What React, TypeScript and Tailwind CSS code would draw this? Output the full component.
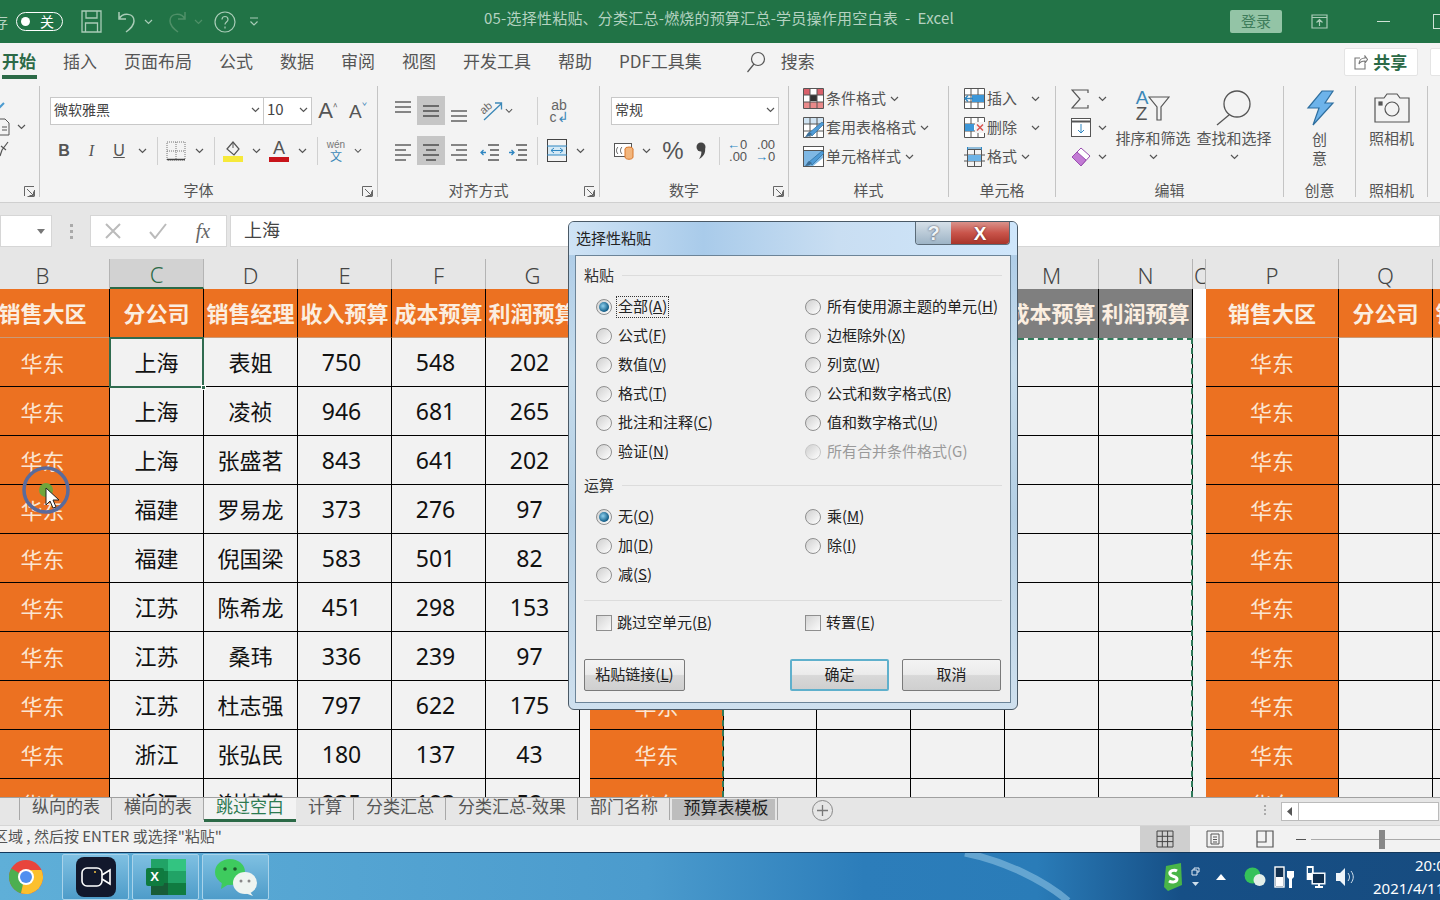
import React from "react";

const Chev = ({ c = "#555" }: { c?: string }) => (
  <svg width="9" height="6" viewBox="0 0 9 6"><path d="M1 1l3.5 3.5L8 1" stroke={c} fill="none" strokeWidth="1.2" /></svg>
);
const S = ({ className = "", children }: { className?: string; children?: React.ReactNode }) => (
  <div className={"flex shrink-0 items-center justify-center " + className}>{children}</div>
);
const VSep = () => <div className="h-[28px] w-px shrink-0 bg-[#d0d0d0]" />;
const Launcher = () => (
  <svg width="11" height="11" viewBox="0 0 11 11"><path d="M0.5 10V0.5H10M10 10.5H3.5M10.5 10.5V4M3 3l6.5 6.5M9.5 5.5v4h-4" stroke="#666" fill="none" strokeWidth="1" /></svg>
);
const Lines = ({ rows, c = "#555" }: { rows: number[][]; c?: string }) => (
  <svg width="22" height="22" viewBox="0 0 22 22">
    {rows.map((r, i) => <path key={i} d={`M${r[1]} ${r[0]}H${r[2]}`} stroke={c} strokeWidth="1.4" />)}
  </svg>
);
const Group = ({ className = "", labelCls = "", label, launcher, children }: { className?: string; labelCls?: string; label: string; launcher?: boolean; children: React.ReactNode }) => (
  <div className={"relative flex h-[111px] shrink-0 flex-col border-r border-[#c4c4c4] " + className}>
    <div className="flex-1">{children}</div>
    <div className={"h-[20px] text-center text-[15px] leading-[26px] text-[#555] " + labelCls}>{label}</div>
    {launcher && <div className="absolute bottom-[0px] right-[4px] h-[11px] w-[11px]"><Launcher /></div>}
  </div>
);

function TitleBar() {
  return (
    <div className="flex h-[43px] shrink-0 items-center bg-[#217346] text-[15px] text-[#b4d2c0]">
      <div className="w-[16px] shrink-0 overflow-hidden text-right text-[15px] leading-[38px]"><span className="relative -left-[8px]">存</span></div>
      <div className="flex h-[19px] w-[47px] shrink-0 items-center rounded-full border border-white pl-[4px] text-[14px] leading-none text-white">
        <div className="h-[9px] w-[9px] rounded-full bg-white" />
        <span className="mb-[2px] ml-[10px]">关</span>
      </div>
      <S className="ml-[17px] w-[22px]">
        <svg width="21" height="23" viewBox="0 0 21 23" fill="none" stroke="#a9ccb7" strokeWidth="1.3"><path d="M1 1h19v21H1zM5 1v7h11V1M4.500 22v-9h12v9" /></svg>
      </S>
      <S className="ml-[14px] w-[22px]">
        <svg width="20" height="24" viewBox="0 0 20 24" fill="none" stroke="#a9ccb7" strokeWidth="1.5"><path d="M2 2v7h7M2 9c4-7 15-6 15 2 0 5-4 8-8 11" /></svg>
      </S>
      <S className="ml-[5px] w-[10px]"><Chev c="#a9ccb7" /></S>
      <S className="ml-[13px] w-[22px]">
        <svg width="20" height="24" viewBox="0 0 20 24" fill="none" stroke="#4f9068" strokeWidth="1.5"><path d="M18 2v7h-7M18 9C14 2 3 3 3 11c0 5 4 8 8 11" /></svg>
      </S>
      <S className="ml-[5px] w-[10px]"><Chev c="#4f9068" /></S>
      <S className="ml-[11px] w-[22px]">
        <svg width="22" height="22" viewBox="0 0 22 22" fill="none" stroke="#a9ccb7" strokeWidth="1.2"><circle cx="11" cy="11" r="10" /><path d="M8 8.500c0-4 6-4 6 0 0 2.500-3 2.500-3 5M11 15.500v2" /></svg>
      </S>
      <S className="ml-[13px] w-[10px]">
        <svg width="10" height="10" viewBox="0 0 10 10" fill="none" stroke="#a9ccb7" strokeWidth="1.2"><path d="M1 1h8M1.500 4.500L5 8l3.500-3.500" /></svg>
      </S>
      <div className="ml-[225px] w-[470px] shrink-0 whitespace-nowrap pb-[8px] text-[15px] leading-[37px] tracking-[0.22px]">05-选择性粘贴、分类汇总-燃烧的预算汇总-学员操作用空白表&nbsp; -&nbsp; Excel</div>
      <div className="ml-[276px] flex h-[23px] w-[52px] shrink-0 items-center justify-center rounded-[2px] bg-[#93c4a6] pb-[1px] text-[15px] text-[#3e7d5b]">登录</div>
      <S className="ml-[27px] w-[20px]">
        <svg width="17" height="15" viewBox="0 0 17 15" fill="none" stroke="#a9ccb7" strokeWidth="1.2"><path d="M1 1h15v13H1zM1 3.500h15M8.500 12V6M5.500 8.500l3-3 3 3" /></svg>
      </S>
      <div className="ml-[48px] h-px w-[13px] shrink-0 bg-[#cfe2d6]" />
      <div className="ml-[43px] h-[15px] w-[12px] shrink-0 border border-[#cfe2d6]" />
    </div>
  );
}

function TabRow() {
  const tabs = ["插入", "页面布局", "公式", "数据", "审阅", "视图", "开发工具", "帮助", "PDF工具集"];
  return (
    <div className="flex h-[43px] shrink-0 items-start whitespace-nowrap bg-[#f3f3f3] pl-[2px] text-[17px] leading-[36px] text-[#555]">
      <div className="flex h-[36px] flex-col">
        <div className="h-[32px] font-bold leading-[36px] text-[#2c6a47]">开始</div>
        <div className="h-[4px] w-[35px] bg-[#2c6a47]" />
      </div>
      <div className="ml-[26px] flex gap-[27px]">
        {tabs.map((t) => <span key={t} className="whitespace-nowrap">{t}</span>)}
      </div>
      <S className="ml-[44px] h-[38px] w-[20px]">
        <svg width="20" height="22" viewBox="0 0 20 22" fill="none" stroke="#555" strokeWidth="1.2"><circle cx="12" cy="8" r="6.500" /><path d="M8 13L1.500 21" /></svg>
      </S>
      <span className="ml-[15px] shrink-0">搜索</span>
      <div className="ml-[529px] mt-[5px] flex h-[28px] w-[74px] shrink-0 items-center justify-center gap-[5px] rounded-[2px] border border-[#e4e4e4] bg-white font-bold leading-none text-[#2c6a47]">
        <svg width="14" height="15" viewBox="0 0 14 15" fill="none" stroke="#777" strokeWidth="1.1"><path d="M6 3H1v11h10V9M5 9c0-4 3-6 6-6V1l2.500 3.500L11 8V6C8 6 6 7 5 9z" /></svg>
        <span className="mb-[2px]">共享</span>
      </div>
      <div className="ml-[12px] mt-[5px] h-[28px] w-[30px] shrink-0 rounded-[2px] border border-[#e4e4e4] bg-white" />
    </div>
  );
}

const Item = ({ icon, text, w, chevMl }: { icon: React.ReactNode; text: string; w: string; chevMl?: string }) => (
  <div className={"flex h-[29px] items-center text-[15px] leading-none text-[#555] " + w}>
    <S className="w-[24px]">{icon}</S>
    <span className="ml-[1px] whitespace-nowrap pb-[2px]">{text}</span>
    <span className={"flex " + (chevMl || "ml-[4px]")}><Chev /></span>
  </div>
);

const Ic = ({ children }: { children: React.ReactNode }) => (
  <svg width="21" height="21" viewBox="0 0 21 21" fill="none">{children}</svg>
);
const Grid = () => <path d="M0.500 0.500h20v20h-20zM7 0v21M14 0v21M0 7h21M0 14h21" stroke="#555" strokeWidth="1" />;
const IconCond = () => (
  <Ic>
    <rect x="0.500" y="0.500" width="20" height="20" fill="#fff" />
    <rect x="1" y="1" width="6" height="6" fill="#d9606a" /><rect x="14" y="1" width="6" height="6" fill="#d9606a" />
    <rect x="7" y="7" width="7" height="6" fill="#333" /><rect x="1" y="14" width="6" height="6" fill="#e98a8a" /><rect x="7" y="14" width="13" height="6" fill="#e98a8a" />
    <Grid />
  </Ic>
);
const Brush = () => (
  <>
    <path d="M19 5l2 2L9 19l-3-3z" fill="#4f9bd6" stroke="#2c6f9e" strokeWidth="0.700" />
    <path d="M6 15c-2 1-2 3-4 5 3 0 6-1 7-3z" fill="#3b6e96" />
  </>
);
const IconTable = () => (
  <Ic><rect x="0.500" y="0.500" width="20" height="20" fill="#fff" /><rect x="1" y="1" width="19" height="6" fill="#cfe3f2" /><Grid /><Brush /></Ic>
);
const IconStyle = () => (
  <Ic><rect x="0.500" y="0.500" width="20" height="20" fill="#fff" stroke="#555" /><path d="M1 1h19v5H1z" fill="#fff" /><path d="M0 4.500h21" stroke="#555" /><path d="M1 5h19v7L10 20H1z" fill="#7fb8e4" /><Brush /></Ic>
);
const IconInsert = () => (
  <Ic><rect x="0.500" y="0.500" width="20" height="20" fill="#fff" /><Grid /><rect x="8" y="7" width="12" height="7" fill="#3d97d8" /><path d="M9 10.500H1M4 7.500l-3 3 3 3" stroke="#2f86c1" strokeWidth="1.400" /></Ic>
);
const IconDelete = () => (
  <Ic><rect x="0.500" y="0.500" width="20" height="20" fill="#fff" /><Grid /><rect x="1" y="7" width="9" height="7" fill="#3d97d8" /><rect x="11" y="5" width="10" height="11" fill="#f3f3f3" /><path d="M13 7.500l6 6M19 7.500l-6 6" stroke="#d9534f" strokeWidth="1.500" /></Ic>
);
const IconFormat = () => (
  <Ic><path d="M3.500 3.500h14v17h-14zM0 9h21M0 15h21M10.500 3v18" stroke="#555" /><rect x="4" y="9" width="13" height="6" fill="#6db3e6" /><path d="M3.500 1v3M17.500 1v3M3.500 2h14" stroke="#2f86c1" /></Ic>
);

function Ribbon() {
  return (
    <div className="flex h-[117px] shrink-0 border-b border-[#cfcfcf] bg-[#f3f3f3]">
      {/* clipboard */}
      <Group className="w-[40px]" label="" launcher>
        <div className="flex h-full flex-col pt-[14px]">
          <svg width="10" height="12" viewBox="0 0 10 12"><path d="M-2 9l6-6" stroke="#4b9bd0" strokeWidth="2" /></svg>
          <div className="mt-[6px] flex items-center gap-[7px]">
            <svg width="10" height="18" viewBox="0 0 10 18" fill="none" stroke="#555"><path d="M-3 1h8l4 4v12H-3zM2 9h5M2 12h5" /></svg>
            <Chev />
          </div>
          <svg className="mt-[5px]" width="9" height="16" viewBox="0 0 9 16" fill="none" stroke="#555" strokeWidth="1.2"><path d="M8 1L2 9l-2 6M6 9L1 5" /></svg>
        </div>
      </Group>
      {/* font */}
      <Group className="w-[338px]" labelCls="pr-[20px]" label="字体" launcher>
        <div className="pl-[10px] pt-[11px]">
          <div className="flex h-[28px] items-center">
            <div className="flex h-[28px] w-[214px] items-center justify-between border border-[#c8c8c8] bg-white pb-[3px] pl-[3px] pr-[3px] text-[14px] text-[#444]">微软雅黑<Chev /></div>
            <div className="-ml-px flex h-[28px] w-[49px] items-center justify-between border border-[#c8c8c8] bg-white pb-[3px] pl-[3px] pr-[3px] text-[15px] text-[#444]">10<Chev /></div>
            <S className="ml-[5px] h-[28px] w-[22px] items-center text-[22px] leading-none text-[#555]"><span className="font-['Liberation_Sans',sans-serif] font-normal">A</span><span className="-mt-[10px] text-[9px]">^</span></S>
            <S className="ml-[8px] h-[28px] w-[22px] text-[19px] leading-none text-[#555]"><span className="font-['Liberation_Sans',sans-serif]">A</span><span className="-mt-[10px] text-[9px] text-[#3c88b8]">ˇ</span></S>
          </div>
          <div className="mt-[11px] flex h-[29px] items-center text-[#555]">
            <S className="w-[28px] font-['Liberation_Sans',sans-serif] text-[16px] font-bold">B</S>
            <S className="w-[27px] font-['Liberation_Serif',serif] text-[16px] italic">I</S>
            <S className="w-[28px] font-['Liberation_Sans',sans-serif] text-[16px] underline">U</S>
            <S className="w-[18px]"><Chev /></S>
            <div className="ml-[6px]"><VSep /></div>
            <S className="w-[35px]">
              <svg width="20" height="20" viewBox="0 0 20 20" fill="none" stroke="#777"><path d="M1 1h18v18H1zM10 1v18M1 10h18" strokeDasharray="1 1" /><path d="M1 18.500h18" stroke="#444" strokeWidth="1.5" /></svg>
            </S>
            <S className="w-[12px]"><Chev /></S>
            <div className="ml-[9px]"><VSep /></div>
            <S className="w-[36px]">
              <svg width="22" height="24" viewBox="0 0 22 24"><path d="M5 10l6-7 6 7-5 6z" fill="none" stroke="#555" strokeWidth="1.2" /><path d="M11 3v6" stroke="#555" /><rect x="1" y="17" width="20" height="6" fill="#f6e93a" /></svg>
            </S>
            <S className="w-[10px]"><Chev /></S>
            <S className="w-[36px]">
              <div className="flex w-[20px] flex-col items-center font-['Liberation_Sans',sans-serif] text-[18px] leading-[18px] text-[#555]">A<div className="h-[5px] w-[20px] bg-[#c8141a]" /></div>
            </S>
            <S className="w-[10px]"><Chev /></S>
            <div className="ml-[10px]"><VSep /></div>
            <S className="w-[36px]">
              <div className="flex flex-col items-center leading-none"><span className="font-['Liberation_Sans',sans-serif] text-[10px] text-[#777]">wén</span><span className="text-[12px] text-[#3c88b8]">文</span></div>
            </S>
            <S className="w-[8px]"><Chev /></S>
          </div>
        </div>
      </Group>
      {/* alignment */}
      <Group className="w-[222px]" labelCls="pr-[20px]" label="对齐方式" launcher>
        <div className="pl-[11px] pt-[10px]">
          <div className="flex h-[29px] items-center">
            <S className="w-[28px]"><Lines rows={[[2, 3, 19], [7, 3, 19], [12, 3, 19]]} /></S>
            <S className="h-[29px] w-[28px] bg-[#c6c6c6]"><Lines rows={[[6, 3, 19], [11, 3, 19], [16, 3, 19]]} c="#444" /></S>
            <S className="w-[28px]"><Lines rows={[[11, 3, 19], [16, 3, 19], [21, 3, 19]]} /></S>
            <S className="ml-[4px] w-[28px]">
              <svg width="24" height="24" viewBox="0 0 24 24" fill="none"><path d="M5 21L22 5M16 4h6.500v6.500" stroke="#3c88b8" strokeWidth="1.3" /><text x="2" y="13" fontSize="11" fill="#666" fontFamily="Liberation Sans" transform="rotate(-40 7 11)">ab</text></svg>
            </S>
            <S className="w-[8px]"><Chev /></S>
            <div className="ml-[24px]"><VSep /></div>
            <S className="ml-[6px] w-[30px]">
              <div className="flex flex-col items-center font-['Liberation_Sans',sans-serif] text-[14px] leading-[12px] text-[#666]">ab<span>c<span className="text-[#3c88b8]">↲</span></span></div>
            </S>
          </div>
          <div className="mt-[11px] flex h-[29px] items-center">
            <S className="w-[28px]"><Lines rows={[[5, 3, 19], [10, 3, 14], [15, 3, 19], [20, 3, 14]]} /></S>
            <S className="h-[29px] w-[28px] bg-[#c6c6c6]"><Lines rows={[[5, 3, 19], [10, 6, 16], [15, 3, 19], [20, 6, 16]]} c="#444" /></S>
            <S className="w-[28px]"><Lines rows={[[5, 3, 19], [10, 8, 19], [15, 3, 19], [20, 8, 19]]} /></S>
            <S className="ml-[3px] w-[28px]">
              <svg width="22" height="22" viewBox="0 0 22 22" fill="none"><path d="M9 5h11M11 10h9M11 15h9M9 20h11" stroke="#555" strokeWidth="1.3" /><path d="M7 12.500H2M4.500 10L2 12.500 4.500 15" stroke="#2f86c1" strokeWidth="1.3" /></svg>
            </S>
            <S className="w-[28px]">
              <svg width="22" height="22" viewBox="0 0 22 22" fill="none"><path d="M9 5h11M11 10h9M11 15h9M9 20h11" stroke="#555" strokeWidth="1.3" /><path d="M2 12.500h5M4.500 10L7 12.500 4.500 15" stroke="#2f86c1" strokeWidth="1.3" /></svg>
            </S>
            <div className="ml-[5px]"><VSep /></div>
            <S className="ml-[8px] w-[22px]">
              <svg width="20" height="24" viewBox="0 0 20 24" fill="none" stroke="#444"><rect x="0.500" y="0.500" width="19" height="22" /><rect x="1" y="7" width="18" height="9" fill="#d5e9f5" stroke="none" /><path d="M0 7h20M0 16h20M4 11.500h12M7 9l-3 2.500L7 14M13 9l3 2.500L13 14" stroke="#2f86c1" /></svg>
            </S>
            <S className="ml-[6px] w-[12px]"><Chev /></S>
          </div>
        </div>
      </Group>
      {/* number */}
      <Group className="w-[189px]" labelCls="pr-[20px]" label="数字" launcher>
        <div className="pl-[11px] pt-[11px]">
          <div className="flex h-[28px] w-[168px] items-center justify-between border border-[#c8c8c8] bg-white pb-[3px] pl-[3px] pr-[3px] text-[14px] text-[#444]">常规<Chev /></div>
          <div className="mt-[11px] flex h-[29px] items-center text-[#555]">
            <S className="w-[26px]">
              <svg width="21" height="20" viewBox="0 0 21 20" fill="none"><rect x="0.500" y="2.500" width="17" height="13" stroke="#555" fill="#fff" /><path d="M4 6c-2 2-2 5 0 7M8 6c-2 2-2 5 0 7" stroke="#555" /><ellipse cx="15" cy="8" rx="4" ry="2" fill="#f2b57c" stroke="#d8762a" /><path d="M11 8v8c0 3 8 3 8 0V8" fill="#f2b57c" stroke="#d8762a" /></svg>
            </S>
            <S className="ml-[1px] w-[16px]"><Chev /></S>
            <S className="ml-[3px] w-[32px] font-['Liberation_Sans',sans-serif] text-[24px] leading-none">%</S>
            <S className="w-[24px]">
              <svg width="10" height="17" viewBox="0 0 10 17"><circle cx="5" cy="5" r="4.500" fill="#444" /><path d="M9 6c1 5-2 9-6 11 2-3 3-6 2-9z" fill="#444" /></svg>
            </S>
            <div className="ml-[6px]"><VSep /></div>
            <S className="ml-[3px] w-[28px]">
              <div className="flex flex-col items-end font-['Liberation_Sans',sans-serif] text-[13px] leading-[12px] text-[#555]"><span><span className="text-[#2f86c1]">←</span>0</span><span>.00</span></div>
            </S>
            <S className="w-[28px]">
              <div className="flex flex-col items-end font-['Liberation_Sans',sans-serif] text-[13px] leading-[12px] text-[#555]"><span>.00</span><span><span className="text-[#2f86c1]">→</span>0</span></div>
            </S>
          </div>
        </div>
      </Group>
      {/* styles */}
      <Group className="w-[160px]" label="样式">
        <div className="-mt-[2px] pl-[12px]">
          <Item w="w-[140px]" text="条件格式" icon={<IconCond />} />
          <Item w="w-[140px]" text="套用表格格式" icon={<IconTable />} />
          <Item w="w-[140px]" text="单元格样式" icon={<IconStyle />} />
        </div>
      </Group>
      {/* cells */}
      <Group className="w-[107px]" label="单元格">
        <div className="-mt-[2px] pl-[13px]">
          <Item w="w-[90px]" text="插入" chevMl="ml-[14px]" icon={<IconInsert />} />
          <Item w="w-[90px]" text="删除" chevMl="ml-[14px]" icon={<IconDelete />} />
          <Item w="w-[90px]" text="格式" icon={<IconFormat />} />
        </div>
      </Group>
      {/* edit */}
      <Group className="w-[228px]" label="编辑">
        <div className="-mt-[2px] flex">
          <div className="ml-[15px] flex w-[41px] flex-col">
            <div className="flex h-[29px] items-center gap-[9px]">
              <svg width="18" height="20" viewBox="0 0 18 20" fill="none" stroke="#555" strokeWidth="1.2"><path d="M17 4V1H1l8 9-8 9h16v-3" /></svg><Chev />
            </div>
            <div className="flex h-[29px] items-center gap-[7px]">
              <svg width="20" height="20" viewBox="0 0 20 20" fill="none"><rect x="0.500" y="0.500" width="19" height="18" fill="#fff" stroke="#555" /><path d="M0 3.500h20" stroke="#555" strokeWidth="2" /><path d="M10 6v9M7 12l3 3 3-3" stroke="#2f86c1" /></svg><Chev />
            </div>
            <div className="flex h-[29px] items-center gap-[7px]">
              <svg width="20" height="20" viewBox="0 0 20 20"><path d="M10 1l9 8-9 10-9-9z" fill="#fff" stroke="#9a4fb0" /><path d="M1 10l5-5 9 8-5 6z" fill="#c27ad4" stroke="#9a4fb0" /></svg><Chev />
            </div>
          </div>
          <div className="ml-[1px] flex w-[80px] flex-col items-center">
            <div className="mt-[6px] flex h-[34px] items-start">
              <div className="flex flex-col font-['Liberation_Sans',sans-serif] text-[19px] leading-[16px]"><span className="text-[#3c88b8]">A</span><span className="text-[#555]">Z</span></div>
              <svg width="22" height="28" className="mt-[5px]" viewBox="0 0 22 28" fill="none" stroke="#555" strokeWidth="1.2"><path d="M1 2h20l-8 10v13h-4V12z" /></svg>
            </div>
            <div className="mt-[3px] whitespace-nowrap text-[15px] leading-[22px] text-[#555]">排序和筛选</div>
            <div className="mt-[3px] flex h-[10px] items-center"><Chev /></div>
          </div>
          <div className="flex w-[82px] flex-col items-center">
            <div className="flex h-[43px] items-start pt-[5px]">
              <svg width="38" height="38" viewBox="0 0 38 38" fill="none" stroke="#555" strokeWidth="1.3"><circle cx="22" cy="15" r="13" /><path d="M14 26L2 36" /></svg>
            </div>
            <div className="whitespace-nowrap text-[15px] leading-[22px] text-[#555]">查找和选择</div>
            <div className="mt-[3px] flex h-[10px] items-center"><Chev /></div>
          </div>
        </div>
      </Group>
      <Group className="w-[72px]" label="创意">
        <div className="flex flex-col items-center pt-[4px]">
          <svg width="30" height="36" viewBox="0 0 30 36"><path d="M17 1h11l-8 12h8L8 35l6-17H3z" fill="#6db3ea" stroke="#2f6f9f" strokeWidth="1.2" /></svg>
          <div className="mt-[3px] text-center text-[15px] leading-[19px] text-[#555]">创<br />意</div>
        </div>
      </Group>
      <Group className="w-[72px]" label="照相机">
        <div className="flex flex-col items-center pt-[7px]">
          <svg width="36" height="30" viewBox="0 0 36 30" fill="none" stroke="#555" strokeWidth="1.2"><path d="M1 5h9l3-4h10l3 4h9v24H1z" /><circle cx="18" cy="16" r="7" /><rect x="5" y="9" width="3" height="3" fill="#555" /></svg>
          <div className="mt-[5px] whitespace-nowrap text-center text-[15px] leading-[19px] text-[#555]">照相机</div>
        </div>
      </Group>
    </div>
  );
}

function FormulaBar() {
  return (
    <div className="flex h-[56px] shrink-0 bg-[#e6e6e6] pt-[12px]">
      <div className="flex h-[32px] w-[52px] items-center justify-end border border-[#d6d6d6] bg-white pr-[6px]">
        <svg width="8" height="5" viewBox="0 0 8 5"><path d="M0 0h8L4 5z" fill="#777" /></svg>
      </div>
      <S className="h-[32px] w-[38px] text-[#999]">
        <div className="flex flex-col gap-[3px]"><div className="h-[3px] w-[3px] bg-[#aaa]" /><div className="h-[3px] w-[3px] bg-[#aaa]" /><div className="h-[3px] w-[3px] bg-[#aaa]" /></div>
      </S>
      <div className="flex h-[32px] w-[137px] items-center border border-[#d6d6d6] bg-white">
        <S className="w-[44px]"><svg width="16" height="16" viewBox="0 0 16 16"><path d="M1 1l14 14M15 1L1 15" stroke="#bbb" strokeWidth="2" /></svg></S>
        <S className="w-[46px]"><svg width="18" height="16" viewBox="0 0 18 16" fill="none"><path d="M1 9l5 6L17 1" stroke="#bbb" strokeWidth="2" /></svg></S>
        <S className="w-[44px] font-['Liberation_Serif',serif] text-[20px] italic text-[#666]">fx</S>
      </div>
      <div className="ml-[3px] flex h-[32px] flex-1 items-center border border-[#d6d6d6] bg-white pb-[3px] pl-[13px] text-[18px] text-[#444]">上海</div>
    </div>
  );
}

const widths = ["w-[134px]", "w-[94px]", "w-[94px]", "w-[94px]", "w-[94px]", "w-[94px]", "w-[10px]", "w-[134px]", "w-[93px]", "w-[94px]", "w-[94px]", "w-[94px]", "w-[94px]", "w-[13px]", "w-[133px]", "w-[94px]", "w-[94px]"];
const letters = ["B", "C", "D", "E", "F", "G", "H", "I", "J", "K", "L", "M", "N", "O", "P", "Q", "R"];
const heads = ["销售大区", "分公司", "销售经理", "收入预算", "成本预算", "利润预算", "", "", "", "", "", "成本预算", "利润预算", "", "销售大区", "分公司", "销售经理"];
const rows: string[][] = [
  ["上海", "表姐", "750", "548", "202"],
  ["上海", "凌祯", "946", "681", "265"],
  ["上海", "张盛茗", "843", "641", "202"],
  ["福建", "罗易龙", "373", "276", "97"],
  ["福建", "倪国梁", "583", "501", "82"],
  ["江苏", "陈希龙", "451", "298", "153"],
  ["江苏", "桑玮", "336", "239", "97"],
  ["江苏", "杜志强", "797", "622", "175"],
  ["浙江", "张弘民", "180", "137", "43"],
  ["浙江", "谢桂芳", "235", "183", "52"],
];

function Sheet() {
  return (
    <div className="h-[538px] shrink-0 overflow-hidden bg-[#f2f2f2]">
      <div className="-ml-[24px] flex h-[30px] w-[1560px]">
        {letters.map((l, i) => (
          <div key={l} className={"flex shrink-0 items-center overflow-hidden border-r border-[#b4b4b4] pt-[2px] font-['Noto_Sans',sans-serif] text-[22px] font-light leading-none " + widths[i] + " " + (l === "C" ? "justify-center border-b-2 border-b-[#2c6a47] bg-[#d2d2d2] text-[#2c6a47]" : l === "O" ? "bg-[#e6e6e6] pl-px text-[#444]" : "justify-center bg-[#e6e6e6] text-[#444]")}>{l === "H" || l === "I" || l === "J" || l === "K" || l === "L" ? "" : l}</div>
        ))}
      </div>
      <div className="-ml-[24px] flex h-[49px] w-[1560px]">
        {heads.map((h, i) => {
          const gray = i === 8 || i === 9 || i === 10 || i === 11 || i === 12;
          const blank = i === 6 || i === 13;
          return (
            <div key={i} className={"flex shrink-0 items-center justify-center overflow-hidden whitespace-nowrap pb-[3px] text-[22px] font-bold leading-none text-[#fbeee0] " + widths[i] + " " + (blank ? "bg-white" : gray ? "border-r border-black bg-[#7f7f7f] text-[#f4f4f4]" : "border-b border-r border-b-[#c99a78] border-r-black bg-[#ec7121]")}>{h}</div>
          );
        })}
      </div>
      {rows.map((r, ri) => (
        <div key={ri} className="-ml-[24px] flex h-[49px] w-[1560px]">
          {letters.map((l, i) => {
            const orange = i === 0 || i === 7 || i === 14;
            const blank = i === 6 || i === 13;
            let text = "";
            if (orange && (i !== 7 || ri >= 7)) text = "华东";
            else if (i >= 1 && i <= 5) text = r[i - 1];
            const num = i >= 3 && i <= 5;
            return (
              <div key={l} className={"flex shrink-0 items-center justify-center overflow-hidden whitespace-nowrap leading-none " + widths[i] + " " + (blank ? "bg-[#f4f4f4]" : orange ? "border-b border-r border-black bg-[#ec7121] text-[22px] text-[#fbe6d2]" : num ? "border-b border-r border-black pr-[6px] font-['Noto_Sans',sans-serif] text-[23px] text-[#111]" : "border-b border-r border-black pb-[2px] text-[22px] text-[#111]")}>{text}</div>
            );
          })}
        </div>
      ))}
    </div>
  );
}

function SheetTabs() {
  const Tab = ({ t }: { t: string }) => (
    <div className="flex h-[22px] items-center whitespace-nowrap border-r border-[#a8a8a8] pb-[8px] pl-[12px] pr-[11px]">{t}</div>
  );
  return (
    <div className="flex h-[28px] shrink-0 items-start whitespace-nowrap border-t border-[#a0a0a0] bg-[#e6e6e6] pl-[19px] text-[17px] leading-none text-[#555]">
      <div className="h-[22px] w-px bg-[#a8a8a8]" />
      <Tab t="纵向的表" />
      <Tab t="横向的表" />
      <div className="flex h-[24px] w-[92px] items-center justify-center border-b-[3px] border-[#2c6a47] bg-[#f3f3f3] pb-[6px] text-[#2c7a50]">跳过空白</div>
      <Tab t="计算" />
      <Tab t="分类汇总" />
      <Tab t="分类汇总-效果" />
      <Tab t="部门名称" />
      <div className="ml-[2px] mt-[1px] flex h-[21px] w-[103px] items-center justify-center bg-[#bdbdbd] pb-[6px] pl-[5px] text-[#222]">预算表模板</div>
      <div className="ml-[2px] h-[22px] w-px bg-[#a8a8a8]" />
      <S className="ml-[34px] mt-[2px] h-[21px] w-[21px] rounded-full border border-[#888]">
        <svg width="11" height="11" viewBox="0 0 11 11"><path d="M5.500 0v11M0 5.500h11" stroke="#777" strokeWidth="1.300" /></svg>
      </S>
      <div className="ml-[431px] mt-[7px] flex flex-col gap-[2px]"><div className="h-[2px] w-[2px] bg-[#aaa]" /><div className="h-[2px] w-[2px] bg-[#aaa]" /><div className="h-[2px] w-[2px] bg-[#aaa]" /></div>
      <div className="ml-[15px] mt-[4px] flex h-[19px] w-[158px] shrink-0 border border-[#bbb] bg-white">
        <S className="h-full w-[17px] border-r border-[#bbb]"><svg width="5" height="9" viewBox="0 0 5 9"><path d="M5 0v9L0 4.500z" fill="#555" /></svg></S>
      </div>
    </div>
  );
}

function StatusBar() {
  return (
    <div className="flex h-[27px] shrink-0 items-center border-t border-[#d6d6d6] bg-[#f2f2f2] text-[15px] leading-none text-[#555]">
      <div className="w-[1140px] overflow-hidden whitespace-nowrap pb-[7px]"><span className="relative -left-[7px]">区域 , 然后按 ENTER 或选择"粘贴"</span></div>
      <S className="h-[27px] w-[50px] bg-[#cfcfcf]">
        <svg width="18" height="18" viewBox="0 0 18 18" fill="none" stroke="#444"><path d="M1 1h16v16H1zM6.300 1v16M11.600 1v16M1 6.300h16M1 11.600h16" /></svg>
      </S>
      <S className="w-[50px]">
        <svg width="18" height="18" viewBox="0 0 18 18" fill="none" stroke="#555"><path d="M1 1h16v16H1zM5 4h8v10H5zM7 7h4M7 9.500h4M7 12h4" /></svg>
      </S>
      <S className="w-[50px]">
        <svg width="18" height="18" viewBox="0 0 18 18" fill="none" stroke="#555"><path d="M1 1h16v16H1zM1 12h9V1" strokeWidth="1.200" /></svg>
      </S>
      <div className="ml-[6px] h-px w-[10px] bg-[#555]" />
      <div className="relative ml-[5px] h-px flex-1 bg-[#aaa]">
        <div className="absolute -top-[9px] left-[68px] h-[19px] w-[6px] bg-[#888]" />
      </div>
    </div>
  );
}

const Chrome = () => (
  <svg width="36" height="36" viewBox="0 0 36 36">
    <circle cx="18" cy="18" r="17" fill="#e8453c" />
    <path d="M18 18L3.300 9.500A17 17 0 0 0 13 34.300z" fill="#4caf50" />
    <path d="M18 11h15.500A17 17 0 0 1 13 34.300z" fill="#fbc02d" />
    <circle cx="18" cy="18" r="8" fill="#fff" />
    <circle cx="18" cy="18" r="6" fill="#4f8ff0" />
  </svg>
);

function Taskbar() {
  return (
    <div className="relative flex h-[48px] shrink-0 items-center overflow-hidden border-t border-[#12385c] bg-[linear-gradient(90deg,#5fafd8_0%,#4b9bcd_45%,#2c7dba_60%,#2a7cb8_72%,#164f86_82%,#174c80_100%)]">
      <svg className="absolute left-[940px] top-0" width="150" height="48" viewBox="0 0 150 48" fill="none"><path d="M25 0C65 8 105 28 128 48" stroke="#7db7dc" strokeWidth="7" opacity="0.7" /></svg>
      <S className="relative h-[46px] w-[52px]"><Chrome /></S>
      <S className="relative ml-[10px] h-[46px] w-[67px] rounded-[2px] border border-[#a9d3ea] bg-[linear-gradient(180deg,#7fc0e2,#4e9cc9)]">
        <div className="flex h-[40px] w-[40px] items-center justify-center rounded-[8px] bg-[#12182c]">
          <svg width="30" height="22" viewBox="0 0 30 22" fill="none" stroke="#fff" strokeWidth="1.600"><rect x="1" y="2" width="20" height="18" rx="5" /><path d="M21 9l8-5v14l-8-5" /><circle cx="14" cy="6" r="1" fill="#f6c445" stroke="none" /></svg>
        </div>
      </S>
      <S className="relative ml-[3px] h-[46px] w-[67px] rounded-[2px] border border-[#a9d3ea] bg-[linear-gradient(180deg,#7fc0e2,#4e9cc9)]">
        <div className="relative h-[36px] w-[40px]">
          <div className="absolute left-[5px] top-0 grid h-[36px] w-[35px] grid-cols-2 grid-rows-3">
            <div className="bg-[#21a366]" /><div className="bg-[#33c481]" /><div className="bg-[#107c41]" /><div className="bg-[#21a366]" /><div className="bg-[#185c37]" /><div className="bg-[#107c41]" />
          </div>
          <div className="absolute left-0 top-[9px] flex h-[18px] w-[18px] items-center justify-center rounded-[2px] bg-[#0f7b3f] font-['Liberation_Sans',sans-serif] text-[13px] font-bold leading-none text-white">X</div>
        </div>
      </S>
      <S className="relative ml-[3px] h-[46px] w-[67px] rounded-[2px] border border-[#a9d3ea] bg-[linear-gradient(180deg,#7fc0e2,#4e9cc9)]">
        <svg width="44" height="40" viewBox="0 0 44 40">
          <ellipse cx="16" cy="15" rx="15" ry="13" fill="#3ecb5e" /><path d="M8 25l-1 7 8-5z" fill="#3ecb5e" />
          <circle cx="11" cy="12" r="1.800" fill="#1d5a2c" /><circle cx="21" cy="12" r="1.800" fill="#1d5a2c" />
          <ellipse cx="31" cy="26" rx="12" ry="11" fill="#eef4f0" /><path d="M36 35l3 4-8-3z" fill="#eef4f0" />
          <circle cx="27" cy="24" r="1.500" fill="#888" /><circle cx="35" cy="24" r="1.500" fill="#888" />
        </svg>
      </S>
      <S className="relative ml-[893px] w-[22px]">
        <svg width="20" height="30" viewBox="0 0 20 30"><path d="M3 4l15-3 1 22-14 6-4-4z" fill="#49b548" /><path d="M14 9c-3-2-8 0-7 3s7 2 7 5-5 4-8 2" fill="none" stroke="#fff" strokeWidth="3" /></svg>
      </S>
      <div className="relative ml-[7px] flex w-[14px] flex-col items-center gap-[6px]">
        <svg width="9" height="9" viewBox="0 0 9 9" fill="none" stroke="#dfeaf4"><path d="M3 3V1h5v4H6M1 3h5v5H1z" /></svg>
        <svg width="7" height="4" viewBox="0 0 7 4"><path d="M0 0h7L3.500 4z" fill="#cfdfec" /></svg>
      </div>
      <S className="relative ml-[13px] w-[16px]"><svg width="10" height="6" viewBox="0 0 10 6"><path d="M0 6h10L5 0z" fill="#fff" /></svg></S>
      <S className="relative ml-[14px] w-[24px]">
        <svg width="22" height="20" viewBox="0 0 22 20"><circle cx="8.500" cy="8.500" r="8" fill="#35c25a" /><circle cx="15.500" cy="13" r="6" fill="#e3eee8" /></svg>
      </S>
      <S className="relative ml-[6px] w-[22px]">
        <svg width="20" height="26" viewBox="0 0 20 26" fill="none" stroke="#fff" strokeWidth="1.400"><rect x="1" y="3" width="9" height="20" fill="#12304f" /><rect x="2" y="13" width="7" height="9" fill="#fff" stroke="none" /><path d="M15 2v5M18 2v5M13 7h7v6l-2 2v9h-3v-9l-2-2z" fill="#fff" stroke="none" /></svg>
      </S>
      <S className="relative ml-[10px] w-[22px]">
        <svg width="20" height="24" viewBox="0 0 20 24"><rect x="0.700" y="1" width="7" height="14" fill="#fff" /><rect x="2" y="3" width="4" height="5" fill="#1c4f7c" /><rect x="6" y="8" width="13" height="11" fill="#dfeaf4" stroke="#fff" /><rect x="7" y="9" width="11" height="9" fill="#0f2f4f" /><path d="M9 22h8M13 19v3" stroke="#fff" strokeWidth="2" /></svg>
      </S>
      <S className="relative ml-[7px] w-[22px]">
        <svg width="20" height="22" viewBox="0 0 20 22" fill="none"><path d="M1 7h4l5-5v18l-5-5H1z" fill="#eef4f9" /><path d="M13 7c2 3 2 5 0 8M16 5c3 4 3 8 0 12" stroke="#cfdfec" /></svg>
      </S>
      <div className="relative ml-[17px] flex w-[90px] shrink-0 flex-col whitespace-nowrap font-['Noto_Sans',sans-serif] text-[15px] leading-[23px] text-white">
        <span className="pl-[42px]">20:05</span>
        <span>2021/4/11</span>
      </div>
    </div>
  );
}

const Radio = ({ on, dim }: { on?: boolean; dim?: boolean }) => (
  <div className={"flex h-[16px] w-[16px] shrink-0 items-center justify-center rounded-full border bg-[linear-gradient(135deg,#cfcfcf,#ffffff)] " + (dim ? "border-[#c8c8c8]" : "border-[#8f8f8f]")}>
    {on && <div className="h-[10px] w-[10px] rounded-full bg-[radial-gradient(circle_at_40%_40%,#8fd0ee,#0e5a85_70%)]" />}
  </div>
);
const Opt = ({ label, k, on, dim, focus }: { label: string; k: string; on?: boolean; dim?: boolean; focus?: boolean }) => (
  <div className={"flex h-[29px] items-center " + (dim ? "text-[#9a9a9a]" : "text-[#222]")}>
    <Radio on={on} dim={dim} />
    <span className={"ml-[4px] whitespace-nowrap border px-px pb-[2px] leading-[18px] " + (focus ? "border-dotted border-[#333]" : "border-transparent")}>
      {label}(<span className={dim ? "" : "underline"}>{k}</span>)
    </span>
  </div>
);
const Check = ({ label, k }: { label: string; k: string }) => (
  <div className="flex h-[29px] items-center text-[#222]">
    <div className="h-[16px] w-[16px] shrink-0 border border-[#8f8f8f] bg-[linear-gradient(135deg,#d4d4d4,#fafafa)]" />
    <span className="ml-[5px] whitespace-nowrap pb-[2px] leading-[18px]">{label}(<span className="underline">{k}</span>)</span>
  </div>
);
const Legend = ({ t }: { t: string }) => (
  <div className="flex h-[20px] items-center gap-[8px] text-[#333]"><span className="pb-[2px]">{t}</span><div className="h-px flex-1 bg-[#dcdcdc]" /></div>
);
const Btn = ({ t, cls }: { t: React.ReactNode; cls: string }) => (
  <div className={"flex h-[32px] items-center justify-center rounded-[2px] bg-[linear-gradient(180deg,#f3f3f3_0%,#ebebeb_48%,#d8d8d8_52%,#cfcfcf_100%)] pb-[4px] text-[#222] " + cls}>{t}</div>
);

function Dialog() {
  return (
    <div className="absolute left-[568px] top-[221px] h-[489px] w-[450px] rounded-[6px] border border-[#4a5966] bg-[linear-gradient(180deg,#a9c9e6_0%,#c6dcec_30%,#b4cfe4_60%,#cfe0ee_100%)] font-['Noto_Sans_CJK_SC',sans-serif] text-[15px] leading-none">
      <div className="flex h-[33px] items-center rounded-t-[5px] bg-[linear-gradient(90deg,#cfe3f5_0%,#a9cbea_30%,#c9def2_60%,#cfe6fb_100%)] pl-[7px] text-[#222]"><span className="pb-[2px]">选择性粘贴</span></div>
      <div className="absolute right-[7px] top-0 flex h-[23px] overflow-hidden rounded-b-[4px] border border-t-0 border-[#5b6b78]">
        <S className="w-[35px] bg-[linear-gradient(180deg,#d5dfe8,#9eb4c6)]">
          <span className="font-['Liberation_Sans',sans-serif] text-[20px] font-bold leading-none text-[#eef3f7] [text-shadow:0_0_2px_#334]">?</span>
        </S>
        <S className="w-[58px] bg-[linear-gradient(180deg,#d9918a_0%,#c9544a_50%,#a8342a_100%)]">
          <span className="font-['Liberation_Sans',sans-serif] text-[19px] font-bold leading-none text-white [text-shadow:0_0_2px_#522]">X</span>
        </S>
      </div>
      <div className="mx-[6px] h-[448px] border border-[#6c8498] bg-[#f0f0f0] px-[8px] pt-[9px]">
        <Legend t="粘贴" />
        <div className="mt-[7px] grid grid-cols-[209px_1fr] pl-[12px]">
          <Opt label="全部" k="A" on focus />
          <Opt label="所有使用源主题的单元" k="H" />
          <Opt label="公式" k="F" />
          <Opt label="边框除外" k="X" />
          <Opt label="数值" k="V" />
          <Opt label="列宽" k="W" />
          <Opt label="格式" k="T" />
          <Opt label="公式和数字格式" k="R" />
          <Opt label="批注和注释" k="C" />
          <Opt label="值和数字格式" k="U" />
          <Opt label="验证" k="N" />
          <Opt label="所有合并条件格式" k="G" dim />
        </div>
        <div className="mt-[9px]"><Legend t="运算" /></div>
        <div className="mt-[7px] grid grid-cols-[209px_1fr] pl-[12px]">
          <Opt label="无" k="O" on />
          <Opt label="乘" k="M" />
          <Opt label="加" k="D" />
          <Opt label="除" k="I" />
          <Opt label="减" k="S" />
        </div>
        <div className="mt-[11px] h-px bg-[#dcdcdc]" />
        <div className="mt-[7px] grid grid-cols-[209px_1fr] pl-[12px]">
          <Check label="跳过空单元" k="B" />
          <Check label="转置" k="E" />
        </div>
        <div className="mt-[22px] flex">
          <Btn cls="w-[101px] border border-[#7a7a7a]" t={<>粘贴链接(<span className="underline">L</span>)</>} />
          <Btn cls="ml-[105px] w-[99px] border-2 border-[#5fb0cc]" t="确定" />
          <Btn cls="ml-[13px] w-[99px] border border-[#7a7a7a]" t="取消" />
        </div>
      </div>
    </div>
  );
}

export default function App() {
  return (
    <div className="relative flex h-[900px] w-[1440px] flex-col overflow-hidden bg-[#f2f2f2] font-['Noto_Sans_CJK_SC',sans-serif]">
      <TitleBar />
      <TabRow />
      <Ribbon />
      <FormulaBar />
      <Sheet />
      <SheetTabs />
      <StatusBar />
      <Taskbar />
      {/* active cell */}
      <div className="absolute left-[109px] top-[337px] h-[51px] w-[95px] border-2 border-[#2f6b4f]" />
      <div className="absolute left-[201px] top-[385px] h-[5px] w-[5px] border border-white bg-[#2f6b4f]" />
      {/* marching ants */}
      <div className="absolute left-[1018px] top-[338px] h-0 w-[175px] border-t-2 border-dashed border-[#2f7a5a]" />
      <div className="absolute left-[1191px] top-[338px] h-[459px] w-0 border-l-2 border-dashed border-[#2f7a5a]" />
      <div className="absolute left-[722px] top-[710px] h-[87px] w-0 border-l-2 border-dashed border-[#2f7a5a]" />
      <Dialog />
      {/* click indicator + cursor */}
      <svg className="absolute left-[20px] top-[464px]" width="52" height="52" viewBox="0 0 52 52">
        <circle cx="26" cy="26" r="22" fill="none" stroke="#5a6b9c" strokeWidth="3.500" />
        <circle cx="26" cy="26" r="7" fill="#6fa53c" />
        <path d="M26 24v17l4-4 3 7 3-1-3-7h6z" fill="#fff" stroke="#222" strokeWidth="1" />
      </svg>
    </div>
  );
}
